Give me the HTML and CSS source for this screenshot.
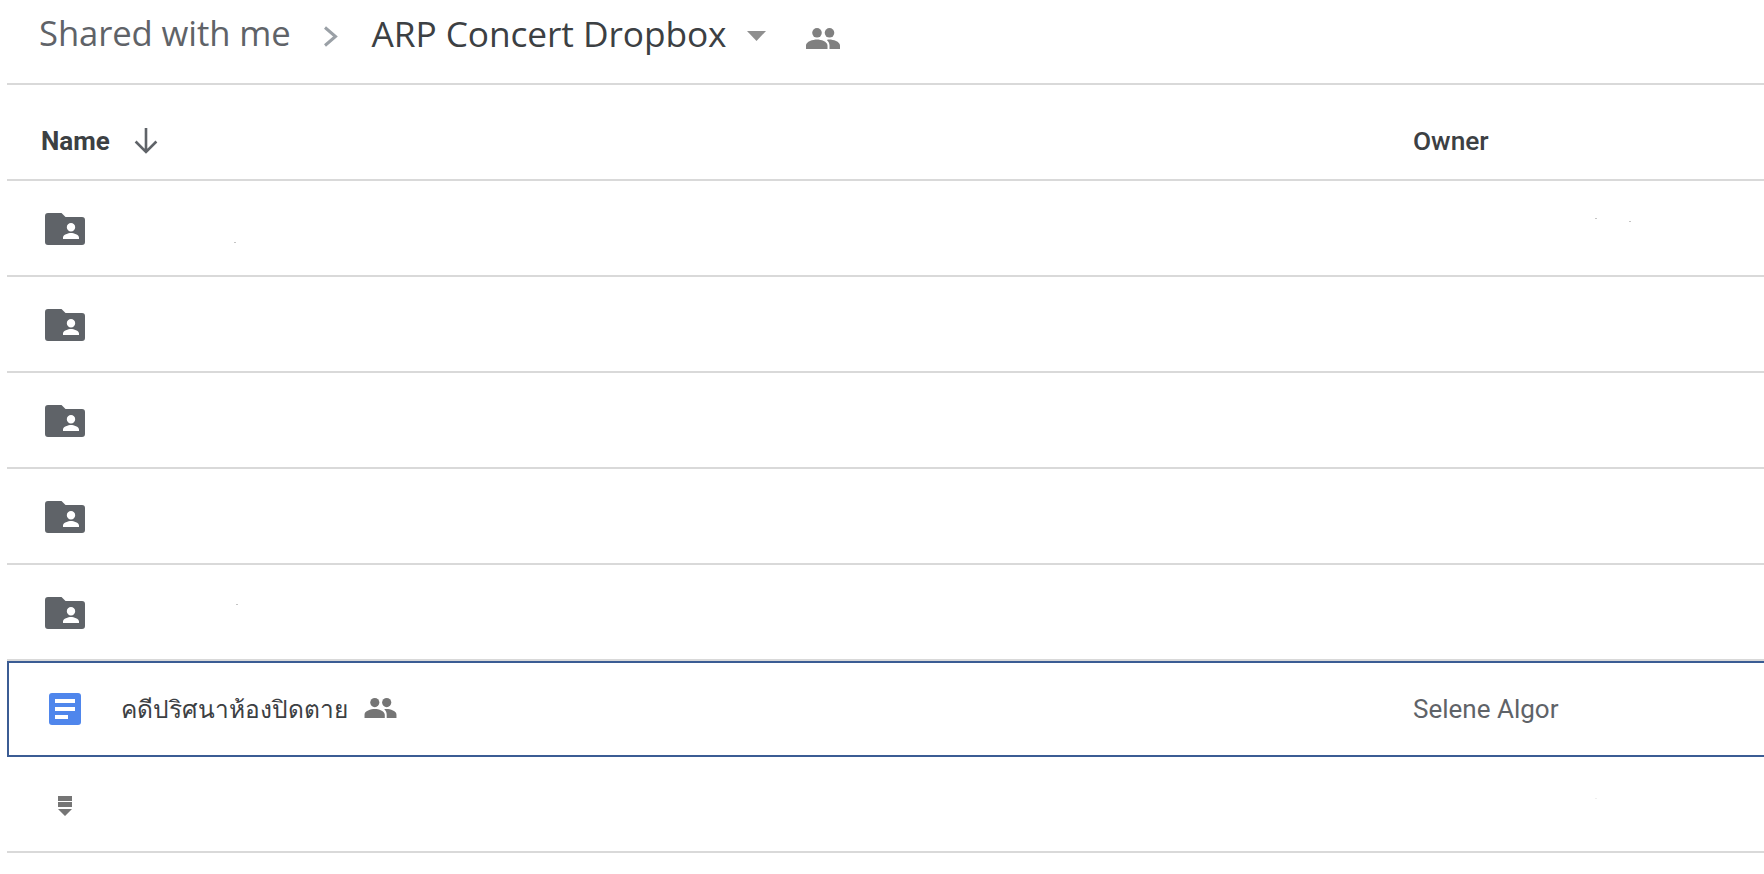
FILE: index.html
```html
<!DOCTYPE html>
<html lang="en">
<head>
<meta charset="utf-8">
<title>ARP Concert Dropbox</title>
<link rel="stylesheet" href="styles.css">
</head>
<body>
<main class="page">
  <header class="crumbs">
    <span class="crumb-parent">Shared with me</span>
    <svg class="chevron" viewBox="0 0 15 21"><path d="M2 1.500 12.500 10.500 2 19.500" fill="none" stroke="currentColor" stroke-width="3"/></svg>
    <span class="crumb-current">ARP Concert Dropbox</span>
    <svg class="caret" viewBox="0 0 19 10"><path d="M0 0h19L9.500 10z" fill="currentColor"/></svg>
    <svg class="people people-large" viewBox="0 0 34 21"><use href="#people"/></svg>
  </header>

  <div class="row head">
    <div class="name-cell">
      <span class="head-name">Name</span>
      <svg class="sort" viewBox="0 0 24 25"><path d="M12 0v23M2 13l10 10 10-10" fill="none" stroke="currentColor" stroke-width="2.500"/></svg>
    </div>
    <div class="head-owner">Owner</div>
  </div>

  <div class="row item">
    <div class="name-cell"><svg class="folder" viewBox="0 0 40 32"><use href="#folder"/></svg></div>
    <i class="speck s1"></i><i class="speck s2"></i><i class="speck s3"></i>
  </div>
  <div class="row item"><div class="name-cell"><svg class="folder" viewBox="0 0 40 32"><use href="#folder"/></svg></div></div>
  <div class="row item"><div class="name-cell"><svg class="folder" viewBox="0 0 40 32"><use href="#folder"/></svg></div></div>
  <div class="row item"><div class="name-cell"><svg class="folder" viewBox="0 0 40 32"><use href="#folder"/></svg></div></div>
  <div class="row item">
    <div class="name-cell"><svg class="folder" viewBox="0 0 40 32"><use href="#folder"/></svg></div>
    <i class="speck s4"></i>
  </div>

  <div class="row item selected">
    <div class="name-cell">
      <svg class="doc" viewBox="0 0 32 32">
        <rect width="32" height="32" rx="3" fill="#4f86ec"/>
        <path d="M6 6h20v4H6zM6 14h20v4H6zM6 22h13v4H6z" fill="#fff"/>
      </svg>
      <span class="file-name">คดีปริศนาห้องปิดตาย</span>
      <svg class="people people-small" viewBox="0 0 34 21"><use href="#people"/></svg>
    </div>
    <div class="owner">Selene Algor</div>
  </div>

  <div class="row item">
    <div class="name-cell">
      <svg class="more" viewBox="0 0 14 20"><path d="M0 0h14v5H0zM0 6h14v5H0zM0 13h14l-7 7z" fill="currentColor"/></svg>
    </div>
    <i class="speck s5"></i>
  </div>
</main>

<svg class="defs" aria-hidden="true">
  <symbol id="people" viewBox="0 0 34 21">
    <circle cx="11" cy="4.800" r="4.800" fill="currentColor"/>
    <circle cx="23.500" cy="4.800" r="4.800" fill="currentColor"/>
    <path d="M0 21v-3.500C0 13.500 7 11.500 11 11.500s10.500 2 10.500 6V21zM23.500 21v-3.500c0-2.300-1-4.200-2.700-5.600 1-.3 1.900-.4 2.700-.4 3.500 0 10.500 2 10.500 6V21z" fill="currentColor"/>
  </symbol>
  <symbol id="folder" viewBox="0 0 40 32">
    <path fill="#5f6368" fill-rule="evenodd" d="M3 0h13.500l4 4H37a3 3 0 0 1 3 3v22a3 3 0 0 1-3 3H3a3 3 0 0 1-3-3V3a3 3 0 0 1 3-3zM26 10a4.200 4.200 0 1 0 0 8.400A4.200 4.200 0 0 0 26 10zM18 26h16v-1.500c0-3-5.300-4.500-8-4.500s-8 1.500-8 4.500z"/>
  </symbol>
</svg>
</body>
</html>
```
FILE: styles.css
```css
* { box-sizing: border-box; }
html, body { margin: 0; background: #fff; }
body { overflow: hidden; }

.page {
  height: 874px;
  padding-left: 7px;
  font-family: Roboto, "Noto Sans", sans-serif;
  color: #3c4043;
}

.crumbs {
  height: 85px;
  display: flex;
  align-items: center;
  padding: 0 0 18px 32px;
  border-bottom: 2px solid #d9d9d9;
  font-family: "Open Sans", Roboto, sans-serif;
  font-size: 34.800px;
  letter-spacing: -0.1px;
  white-space: nowrap;
}
.crumb-parent { color: #5f6368; font-size: 34.650px; }
.crumb-current { color: #3c4043; font-size: 35.300px; }
.chevron { width: 15px; height: 21px; margin: 8px 34px 0 32px; color: #9aa0a6; }
.caret { width: 19px; height: 10px; margin: 7px 40px 0 21px; color: #8f8f8f; }
.people { color: #808080; }
.people-large { width: 34px; height: 21px; margin-top: 12px; }
.people-small { width: 33px; height: 20px; margin: -3px 0 0 16px; color: #757575; }

.row {
  position: relative;
  display: grid;
  grid-template-columns: 1406px 1fr;
  align-items: center;
  height: 96px;
  border-bottom: 2px solid #d9d9d9;
}
.name-cell { display: flex; align-items: center; }

.head { padding-top: 18px; }
.head-name { margin-left: 34px; font-size: 26px; font-weight: 700; color: #3c4043; }
.sort { width: 26px; height: 26px; margin-left: 23px; color: #5f6368; }
.head-owner { font-size: 26.300px; font-weight: 500; color: #3c4043; }

.folder { width: 40px; height: 32px; margin: 2px 0 0 38px; }
.doc { width: 32px; height: 32px; margin-left: 42px; }
.more { width: 14px; height: 20px; margin: 4px 0 0 51px; color: #757575; }

.file-name {
  margin-left: 40px;
  font-family: "Noto Sans", "DejaVu Sans", sans-serif;
  font-size: 24.500px;
  color: #3c4043;
}
.owner { margin-left: -2px; font-size: 26px; color: #5f6368; }

.selected {
  height: 96px;
  border: solid #3b5c94;
  border-width: 2px 0 2px 2px;
}
.selected .name-cell { margin-left: -2px; }

.speck { position: absolute; width: 2px; height: 1px; background: #c4c4c4; }
.s1 { left: 227px; top: 61px; }
.s2 { left: 1588px; top: 37px; }
.s3 { left: 1622px; top: 40px; }
.s4 { left: 229px; top: 39px; }
.s5 { left: 1588px; top: 41px; background: #eee; }

.defs { display: none; }
```
